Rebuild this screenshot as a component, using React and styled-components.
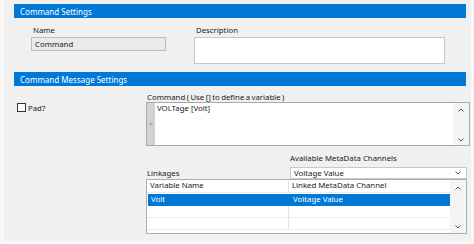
import React from 'react'
import styled, { createGlobalStyle } from 'styled-components'

const GlobalStyle = createGlobalStyle`
  html, body { margin:0; padding:0; background:#f8f8f8; }
  body { font-family:"Noto Sans","Open Sans",sans-serif; }
  * { box-sizing:border-box; }
`

const Window = styled.div`
  width:467px;
  height:241px;
  margin-left:4px;
  padding-top:4px;
  background:#f0f0f0;
  font-size:7.8px;
  color:#1a1a1a;
`

const SectionBar = styled.div`
  margin-left:10px;
  width:452px;
  height:14px;
  margin-top:${p => p.top || 0}px;
  padding-left:6px;
  display:flex;
  align-items:center;
  background:#0078d7;
  color:#fff;
  font-size:8px;
`

const FieldsRow = styled.div`
  display:flex;
  gap:28px;
  padding-left:27px;
  margin-top:7px;
`

const Field = styled.div`
  display:flex;
  flex-direction:column;
`

const Label = styled.div`
  height:10px;
  line-height:10px;
  padding-left:${p => p.indent || 0}px;
  margin-bottom:${p => p.gap || 0}px;
  word-spacing:${p => (p.tight ? '-0.6px' : 'normal')};
  white-space:nowrap;
`

const NameInput = styled.div`
  width:135px;
  height:14px;
  padding-left:3px;
  line-height:12px;
  background:#ebebeb;
  border:1px solid #bdbdbd;
`

const DescBox = styled.div`
  width:251px;
  height:27px;
  background:#fff;
  border:1px solid #c6c6c6;
`

const MessageBody = styled.div`
  display:grid;
  grid-template-columns:142px 324px;
`

const CheckRow = styled.label`
  display:flex;
  align-items:center;
  gap:2px;
  padding-left:13px;
  margin-top:16px;
  height:11px;
`

const Box = styled.span`
  width:9px;
  height:9px;
  background:#fff;
  border:1px solid #333;
`

const RightCol = styled.div`
  display:flex;
  flex-direction:column;
  padding-top:6px;
`

const CodeArea = styled.div`
  height:44px;
  display:flex;
  background:#fff;
  border:1px solid #a9a9a9;
`

const Gutter = styled.div`
  width:8px;
  background:#d2d2d2;
  color:#8a8a8a;
  font-size:5px;
  display:flex;
  align-items:center;
  justify-content:center;
`

const CodeText = styled.div`
  flex:1;
  padding:1px 0 0 2px;
  line-height:9px;
`

const ScrollBar = styled.div`
  width:16px;
  display:flex;
  flex-direction:column;
  justify-content:space-between;
  align-items:center;
  padding:${p => p.pad || '4px 0'};
  background:#f4f4f4;
`

const LinkHead = styled.div`
  display:flex;
  align-items:flex-end;
  margin-top:7px;
`

const LinkLabel = styled.div`
  width:144px;
  padding-left:1px;
  line-height:10px;
  margin-bottom:1px;
`

const ChannelCol = styled.div`
  width:177px;
  display:flex;
  flex-direction:column;
`

const Select = styled.div`
  height:12px;
  display:flex;
  align-items:center;
  justify-content:space-between;
  padding:0 5px 0 3px;
  background:#fff;
  border:1px solid #c8c8c8;
`

const Grid = styled.div`
  width:321px;
  height:55px;
  display:flex;
  background:#fff;
  border:1px solid #adadad;
`

const Rows = styled.div`
  flex:1;
  display:flex;
  flex-direction:column;
`

const Row = styled.div`
  display:grid;
  grid-template-columns:142px 1fr;
  height:${p => p.h || 12}px;
  margin-top:${p => p.mt || 0}px;
  margin-left:${p => (p.selected ? 1 : 0)}px;
  line-height:11px;
  background:${p => (p.selected ? '#0078d7' : '#fff')};
  color:${p => (p.selected ? '#fff' : '#1a1a1a')};
  border-bottom:1px solid ${p => (p.selected ? '#0078d7' : '#ececec')};
`

const Cell = styled.div`
  padding-left:3px;
  border-right:${p => (p.last ? 'none' : '1px solid #e4e4e4')};
  ${p => p.selected && 'border-right-color:#0078d7;'}
  white-space:nowrap;
`

const Chevron = ({ up }) => (
  <svg width="6" height="4" viewBox="0 0 6 4">
    <path d={up ? 'M0.5 3.5 L3 1 L5.5 3.5' : 'M0.5 0.5 L3 3 L5.5 0.5'} fill="none" stroke="#555" strokeWidth="1" />
  </svg>
)

const rows = [
  { name: 'Volt', channel: 'Voltage Value', selected: true },
  { name: '', channel: '' },
  { name: '', channel: '' },
]

export default function App() {
  return (
    <>
      <GlobalStyle />
      <Window>
        <SectionBar>Command Settings</SectionBar>
        <FieldsRow>
          <Field>
            <Label indent={2} gap={2}>Name</Label>
            <NameInput>Command</NameInput>
          </Field>
          <Field>
            <Label indent={2} gap={2}>Description</Label>
            <DescBox />
          </Field>
        </FieldsRow>

        <SectionBar top={8}>Command Message Settings</SectionBar>
        <MessageBody>
          <div>
            <CheckRow>
              <Box />
              Pad?
            </CheckRow>
          </div>
          <RightCol>
            <Label indent={1} tight>Command ( Use [] to define a variable )</Label>
            <CodeArea>
              <Gutter>n</Gutter>
              <CodeText>VOLTage [Volt]</CodeText>
              <ScrollBar pad="5px 0 3px">
                <Chevron up />
                <Chevron />
              </ScrollBar>
            </CodeArea>

            <LinkHead>
              <LinkLabel>Linkages</LinkLabel>
              <ChannelCol>
                <Label gap={4}>Available MetaData Channels</Label>
                <Select>
                  Voltage Value
                  <Chevron />
                </Select>
              </ChannelCol>
            </LinkHead>
            <Grid>
              <Rows>
                <Row h={13}>
                  <Cell>Variable Name</Cell>
                  <Cell last>Linked MetaData Channel</Cell>
                </Row>
                {rows.map((r, i) => (
                  <Row key={i} selected={r.selected} mt={i === 0 ? 1 : 0}>
                    <Cell selected={r.selected}>{r.name}</Cell>
                    <Cell last>{r.channel}</Cell>
                  </Row>
                ))}
              </Rows>
              <ScrollBar pad="6px 0 4px">
                <Chevron up />
                <Chevron />
              </ScrollBar>
            </Grid>
          </RightCol>
        </MessageBody>
      </Window>
    </>
  )
}
